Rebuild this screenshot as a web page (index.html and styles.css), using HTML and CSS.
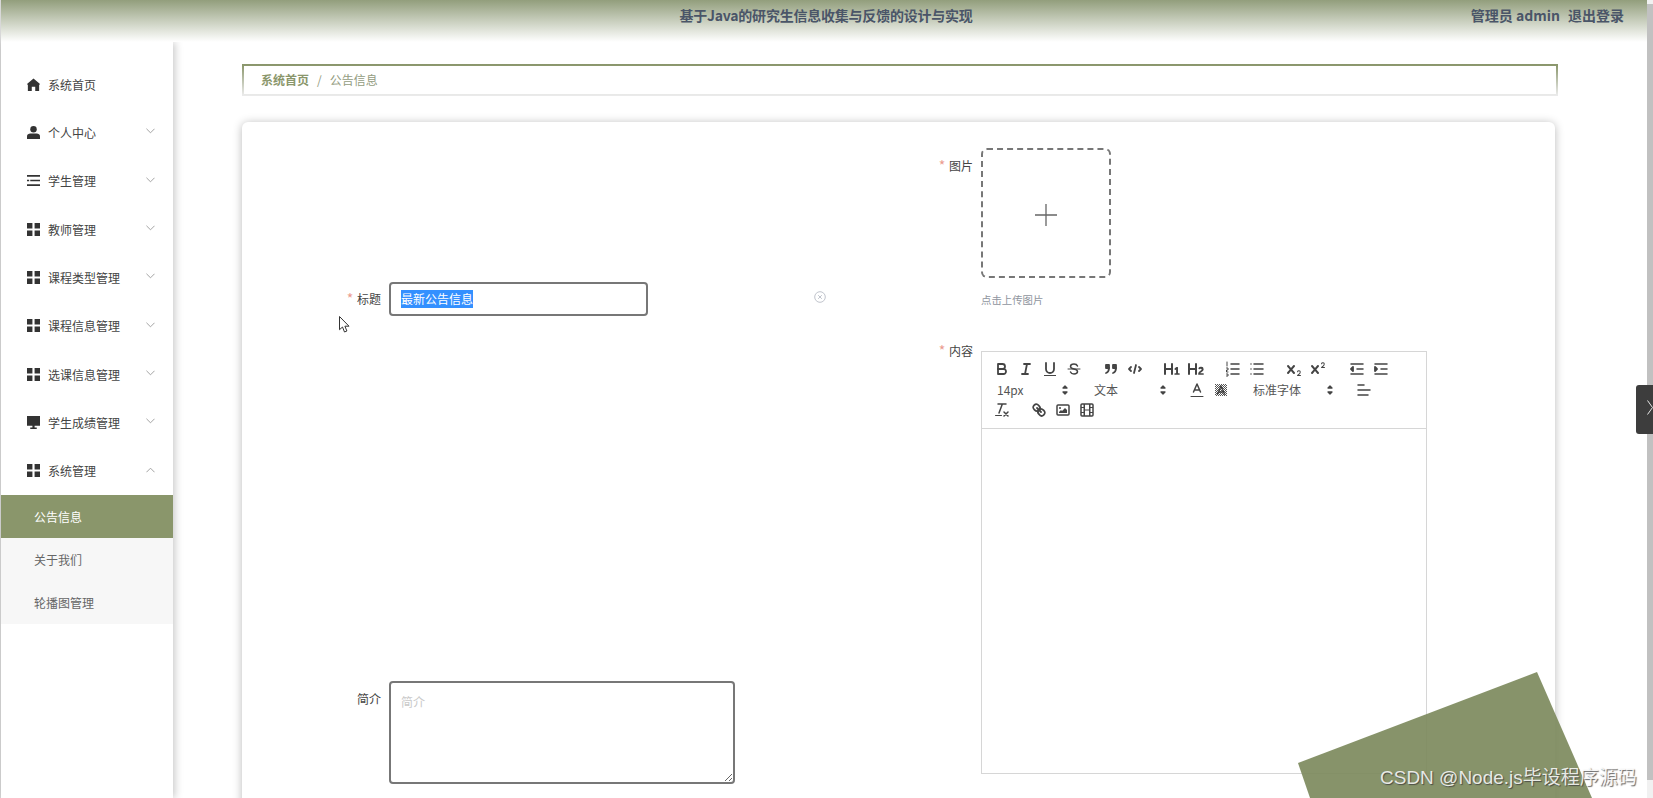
FILE: index.html
```html
<!DOCTYPE html>
<html lang="en">
<head>
    <meta charset="UTF-8">
    <meta name="viewport" content="width=device-width, initial-scale=1.0">
    <title>公告信息</title>
    <link rel="stylesheet" href="styles.css">
</head>
<body>
    <div class="app">
        <div class="app-main">
            <div class="top-bar">
                <div class="top-title">基于Java的研究生信息收集与反馈的设计与实现</div>
                <div class="top-user">
                    <span>管理员 admin</span>
                    <span>退出登录</span>
                </div>
            </div>

            <div class="app-body">
                <div class="sidebar">
                    <div class="menu-item">
                        <svg class="menu-icon" viewBox="0 0 12 12"><path d="M6 .5L0 5.600l.8.9V12h3.600V8h3.200v4h3.600V6.500l.8-.9z"/></svg>
                        <span>系统首页</span>
                    </div>
                    <div class="menu-item">
                        <svg class="menu-icon" viewBox="0 0 12 12"><circle cx="6" cy="3" r="3"/><path d="M0 12V9.500C0 7.800 1.500 7 3 7h6c1.500 0 3 .8 3 2.500V12z"/></svg>
                        <span>个人中心</span>
                        <svg class="menu-arrow" viewBox="0 0 10 6"><path d="M.5.5L5 5 9.500.5"/></svg>
                    </div>
                    <div class="menu-item">
                        <svg class="menu-icon" viewBox="0 0 12 12"><path d="M0 1h12v1.600H0zM3 5.200h9v1.600H3zM0 9.400h12V11H0zM0 5.200h2v1.600H0z"/></svg>
                        <span>学生管理</span>
                        <svg class="menu-arrow" viewBox="0 0 10 6"><path d="M.5.5L5 5 9.500.5"/></svg>
                    </div>
                    <div class="menu-item">
                        <svg class="menu-icon" viewBox="0 0 12 12"><path d="M0 0h5v5H0zM7 0h5v5H7zM0 7h5v5H0zM7 7h5v5H7z"/></svg>
                        <span>教师管理</span>
                        <svg class="menu-arrow" viewBox="0 0 10 6"><path d="M.5.5L5 5 9.500.5"/></svg>
                    </div>
                    <div class="menu-item">
                        <svg class="menu-icon" viewBox="0 0 12 12"><path d="M0 0h5v5H0zM7 0h5v5H7zM0 7h5v5H0zM7 7h5v5H7z"/></svg>
                        <span>课程类型管理</span>
                        <svg class="menu-arrow" viewBox="0 0 10 6"><path d="M.5.5L5 5 9.500.5"/></svg>
                    </div>
                    <div class="menu-item">
                        <svg class="menu-icon" viewBox="0 0 12 12"><path d="M0 0h5v5H0zM7 0h5v5H7zM0 7h5v5H0zM7 7h5v5H7z"/></svg>
                        <span>课程信息管理</span>
                        <svg class="menu-arrow" viewBox="0 0 10 6"><path d="M.5.5L5 5 9.500.5"/></svg>
                    </div>
                    <div class="menu-item">
                        <svg class="menu-icon" viewBox="0 0 12 12"><path d="M0 0h5v5H0zM7 0h5v5H7zM0 7h5v5H0zM7 7h5v5H7z"/></svg>
                        <span>选课信息管理</span>
                        <svg class="menu-arrow" viewBox="0 0 10 6"><path d="M.5.5L5 5 9.500.5"/></svg>
                    </div>
                    <div class="menu-item">
                        <svg class="menu-icon" viewBox="0 0 12 12"><path d="M0 0h12v9H0zM5 9h2v1.500H5zM3 10.500h6V12H3z"/></svg>
                        <span>学生成绩管理</span>
                        <svg class="menu-arrow" viewBox="0 0 10 6"><path d="M.5.5L5 5 9.500.5"/></svg>
                    </div>
                    <div class="menu-item">
                        <svg class="menu-icon" viewBox="0 0 12 12"><path d="M0 0h5v5H0zM7 0h5v5H7zM0 7h5v5H0zM7 7h5v5H7z"/></svg>
                        <span>系统管理</span>
                        <svg class="menu-arrow" viewBox="0 0 10 6"><path d="M.5 5.500L5 1l4.500 4.500"/></svg>
                    </div>
                    <div class="submenu">
                        <div class="submenu-item submenu-active">公告信息</div>
                        <div class="submenu-item">关于我们</div>
                        <div class="submenu-item">轮播图管理</div>
                    </div>
                </div>

                <div class="content">
                    <div class="breadcrumb">
                        <span class="crumb-home">系统首页</span>
                        <span class="crumb-sep">/</span>
                        <span class="crumb-current">公告信息</span>
                    </div>

                    <div class="form-card">
                        <div class="form-col form-col-left">
                            <div class="form-row form-row-title">
                                <label class="form-label label-mid"><i class="required">*</i> 标题</label>
                                <div class="fake-input"><span class="selected-text">最新公告信息</span></div>
                                <svg class="clear-icon" viewBox="0 0 12 12"><circle cx="6" cy="6" r="5.300"/><path d="M4.200 4.200l3.600 3.600M7.800 4.200l-3.600 3.600"/></svg>
                            </div>
                            <div class="form-row form-row-intro">
                                <label class="form-label label-top">简介</label>
                                <textarea class="intro-input" placeholder="简介"></textarea>
                            </div>
                        </div>

                        <div class="form-col">
                            <div class="form-row">
                                <label class="form-label label-top"><i class="required">*</i> 图片</label>
                                <div>
                                    <div class="upload-box">
                                        <svg class="upload-plus" viewBox="0 0 22 22"><path d="M11 0v22M0 11h22"/></svg>
                                    </div>
                                    <div class="upload-hint">点击上传图片</div>
                                </div>
                            </div>
                            <div class="form-row form-row-editor">
                                <label class="form-label label-editor"><i class="required">*</i> 内容</label>
                                <div class="editor">
                                    <div class="toolbar">
                                        <div class="tool-row">
                                            <div class="tool-group">
                                                <span class="tool-btn"><svg viewBox="0 0 18 18"><path d="M5,4H9.500A2.500,2.500,0,0,1,12,6.500v0A2.500,2.500,0,0,1,9.500,9H5V4Z"/><path d="M5,9h5.500A2.500,2.500,0,0,1,13,11.500v0A2.500,2.500,0,0,1,10.500,14H5V9Z"/></svg></span>
                                                <span class="tool-btn"><svg viewBox="0 0 18 18"><path d="M7 4h6M5 14h6M8 14l2-10"/></svg></span>
                                                <span class="tool-btn"><svg viewBox="0 0 18 18"><path d="M5,3V9a4,4,0,0,0,4,4h0a4,4,0,0,0,4-4V3"/><rect class="ico-fill" height="1" width="12" x="3" y="15"/></svg></span>
                                                <span class="tool-btn"><svg viewBox="0 0 18 18"><path class="ico-thin" d="M3 9h12"/><path class="ico-mid" d="M12.500 6C12 4.700 10.700 4 9 4 7 4 5.500 5 5.500 6.500S7 8.500 9 9c2 .5 3.500 1.200 3.500 2.600S11 14 9 14c-1.700 0-3-.7-3.500-2"/></svg></span>
                                            </div>
                                            <div class="tool-group">
                                                <span class="tool-btn"><svg viewBox="0 0 18 18"><rect class="ico-solid" height="3" width="3" x="4" y="5"/><rect class="ico-solid" height="3" width="3" x="11" y="5"/><path d="M7,8c0,4-3,5-3,5"/><path d="M14,8c0,4-3,5-3,5"/></svg></span>
                                                <span class="tool-btn"><svg viewBox="0 0 18 18"><path d="M5 7L3 9l2 2M13 7l2 2-2 2M10 5l-2 8"/></svg></span>
                                            </div>
                                            <div class="tool-group">
                                                <span class="tool-btn"><svg viewBox="0 0 18 18"><path class="ico-fill" d="M10,4V14a1,1,0,0,1-2,0V10H3v4a1,1,0,0,1-2,0V4A1,1,0,0,1,3,4V8H8V4a1,1,0,0,1,2,0Zm6.068,9.209H14.990V7.599a.541.541,0,0,0-.605-.605h-.627a1.011,1.011,0,0,0-.748.297L11.645,8.566a.544.544,0,0,0-.022.858l.286.308a.539.539,0,0,0,.847.033l.099-.088a1.214,1.214,0,0,0,.242-.353h.022s-.011.309-.011.605V13.209H12.041a.541.541,0,0,0-.605.605v.439a.541.541,0,0,0,.605.605h4.027a.541.541,0,0,0,.605-.605v-.439A.541.541,0,0,0,16.068,13.209Z"/></svg></span>
                                                <span class="tool-btn"><svg viewBox="0 0 18 18"><path class="ico-fill" d="M16.740,13.814v.439a.541.541,0,0,1-.605.605H11.855a.584.584,0,0,1-.649-.605V14.013c0-2.905,3.399-3.422,3.399-4.555a.777.777,0,0,0-.847-.781,1.177,1.177,0,0,0-.836.385c-.275.264-.561.374-.858.132l-.429-.341c-.308-.242-.385-.518-.154-.814a2.972,2.972,0,0,1,2.454-1.177,2.454,2.454,0,0,1,2.684,2.409c0,2.453-3.179,2.927-3.278,3.938h2.794A.541.541,0,0,1,16.740,13.814ZM9,3A1,1,0,0,0,8,4V8H3V4A1,1,0,0,0,1,4V14a1,1,0,0,0,2,0V10H8v4a1,1,0,0,0,2,0V4A1,1,0,0,0,9,3Z"/></svg></span>
                                            </div>
                                            <div class="tool-group">
                                                <span class="tool-btn"><svg viewBox="0 0 18 18"><path class="ico-mid" d="M7 4h8M7 9h8M7 14h8"/><path class="ico-thin" d="M3 2v4M2.500 8h1.500v2h-1.500v2h1.500M2.500 14h1.500v2h-1.500"/></svg></span>
                                                <span class="tool-btn"><svg viewBox="0 0 18 18"><path class="ico-mid" d="M6 4h9M6 9h9M6 14h9M3 4h0M3 9h0M3 14h0"/></svg></span>
                                            </div>
                                            <div class="tool-group">
                                                <span class="tool-btn"><svg viewBox="0 0 18 18"><path class="ico-fill" d="M15.500,15H13.861a3.858,3.858,0,0,0,1.914-2.975,1.800,1.800,0,0,0-1.600-1.751A1.921,1.921,0,0,0,12.021,11.700a.5.5,0,1,0,.957.291h0a.914.914,0,0,1,1.053-.725,.81.81,0,0,1,.744.762c0,1.076-1.170,1.870-1.940,2.431A1.456,1.456,0,0,0,12,15.500a.5.5,0,0,0,.5.5h3A.5.5,0,0,0,15.500,15Z"/><path class="ico-fill" d="M9.650,5.241a1,1,0,0,0-1.409.108L6,7.964,3.759,5.349A1,1,0,0,0,2.241,6.649L4.684,9.500,2.241,12.350A1,1,0,0,0,3.759,13.650L6,11.036,8.241,13.650a1,1,0,1,0,1.518-1.300L7.316,9.500,9.759,6.651A1,1,0,0,0,9.650,5.241Z"/></svg></span>
                                                <span class="tool-btn"><svg viewBox="0 0 18 18"><path class="ico-fill" d="M15.500,7H13.861a4.015,4.015,0,0,0,1.914-2.975,1.800,1.800,0,0,0-1.600-1.751A1.922,1.922,0,0,0,12.021,3.700a.5.5,0,1,0,.957.291,.917.917,0,0,1,1.053-.725,.81.81,0,0,1,.744.762c0,1.077-1.164,1.925-1.934,2.486A1.423,1.423,0,0,0,12,7.500a.5.5,0,0,0,.5.5h3A.5.5,0,0,0,15.500,7Z"/><path class="ico-fill" d="M9.650,5.241a1,1,0,0,0-1.409.108L6,7.964,3.759,5.349A1,1,0,0,0,2.241,6.649L4.684,9.500,2.241,12.350A1,1,0,0,0,3.759,13.650L6,11.036,8.241,13.650a1,1,0,1,0,1.518-1.300L7.316,9.500,9.759,6.651A1,1,0,0,0,9.650,5.241Z"/></svg></span>
                                            </div>
                                            <div class="tool-group tool-group-indent">
                                                <span class="tool-btn"><svg viewBox="0 0 18 18"><path class="ico-mid" d="M3 14h12M3 4h12M9 9h6"/><path class="ico-solid" d="M5 7v4L3 9z"/></svg></span>
                                                <span class="tool-btn"><svg viewBox="0 0 18 18"><path class="ico-mid" d="M3 14h12M3 4h12M9 9h6"/><path class="ico-solid" d="M3 7v4l2-2z"/></svg></span>
                                            </div>
                                        </div>
                                        <div class="tool-row">
                                            <div class="tool-picker picker-size">
                                                <span>14px</span>
                                                <svg class="picker-arrow" viewBox="0 0 18 18"><path d="M7 11l2 2 2-2zM7 7l2-2 2 2z"/></svg>
                                            </div>
                                            <div class="tool-picker picker-header">
                                                <span>文本</span>
                                                <svg class="picker-arrow" viewBox="0 0 18 18"><path d="M7 11l2 2 2-2zM7 7l2-2 2 2z"/></svg>
                                            </div>
                                            <div class="tool-group">
                                                <span class="tool-btn"><svg viewBox="0 0 18 18"><path class="ico-thin" d="M3 15.500h12"/><path class="ico-mid" d="M5.500 11L9 3l3.500 8M11.600 9H6.400"/></svg></span>
                                                <span class="tool-btn"><svg viewBox="0 0 18 18"><defs><pattern id="bg-dots" width="2" height="2" patternUnits="userSpaceOnUse"><rect class="dot-cell" width="1" height="1"/><rect class="dot-cell" x="1" y="1" width="1" height="1"/></pattern></defs><rect class="dot-area" x="3" y="3" width="12" height="12"/><path class="ico-mid" d="M5.500 13L9 5l3.500 8M11.600 11H6.400"/></svg></span>
                                            </div>
                                            <div class="tool-picker picker-font">
                                                <span>标准字体</span>
                                                <svg class="picker-arrow" viewBox="0 0 18 18"><path d="M7 11l2 2 2-2zM7 7l2-2 2 2z"/></svg>
                                            </div>
                                            <div class="tool-group">
                                                <span class="tool-btn"><svg viewBox="0 0 18 18"><path class="ico-mid" d="M3 9h12M3 14h10M3 4h6"/></svg></span>
                                            </div>
                                        </div>
                                        <div class="tool-row">
                                            <div class="tool-group">
                                                <span class="tool-btn"><svg viewBox="0 0 18 18"><path class="ico-mid" d="M5 3h8M6 12l3.350-9M11 11l4 4M15 11l-4 4"/><rect class="ico-fill" height="1" rx=".5" width="7" x="2" y="14"/></svg></span>
                                            </div>
                                            <div class="tool-group">
                                                <span class="tool-btn"><svg viewBox="0 0 18 18"><path d="M7 7l4 4"/><path d="M8.900,4.577a3.476,3.476,0,0,1,.36,4.679A3.476,3.476,0,0,1,4.577,8.900C3.185,7.500,2.035,6.400,4.217,4.217S7.500,3.185,8.900,4.577Z"/><path d="M13.423,9.100a3.476,3.476,0,0,0-4.679-.36,3.476,3.476,0,0,0,.36,4.679c1.392,1.392,2.500,2.542,4.679.36S14.815,10.500,13.423,9.100Z"/></svg></span>
                                                <span class="tool-btn"><svg viewBox="0 0 18 18"><rect class="ico-mid" height="10" rx="1" width="12" x="3" y="4"/><circle class="ico-fill" cx="6" cy="7" r="1"/><path class="ico-fill" d="M5 12v-1l2-2 1 1 3-3 2 2v3z"/></svg></span>
                                                <span class="tool-btn"><svg viewBox="0 0 18 18"><rect class="ico-mid" height="12" rx="1" width="12" x="3" y="3"/><rect class="ico-fill" height="12" width="1.500" x="5.500" y="3"/><rect class="ico-fill" height="12" width="1.500" x="11" y="3"/><rect class="ico-fill" height="1" width="5" x="6" y="8.500"/><rect class="ico-fill" height="1" width="3" x="3" y="6"/><rect class="ico-fill" height="1" width="3" x="3" y="11"/><rect class="ico-fill" height="1" width="3" x="12" y="6"/><rect class="ico-fill" height="1" width="3" x="12" y="11"/></svg></span>
                                            </div>
                                        </div>
                                    </div>
                                </div>
                            </div>
                        </div>
                    </div>
                </div>
            </div>
        </div>
        <div class="scrollbar"><div class="scrollbar-thumb"></div></div>
    </div>

    <div class="corner-shape"></div>
    <div class="drawer-handle">
        <svg viewBox="0 0 6 15"><path d="M.5.5L5.500 7.500.5 14.500"/></svg>
    </div>
    <svg class="mouse-pointer" viewBox="0 0 11 17"><path d="M.5.5v13.200l3-2.700 2 5 2.400-1-2-4.800h4.100z"/></svg>
    <div class="watermark">CSDN @Node.js毕设程序源码</div>
</body>
</html>
```

FILE: styles.css
```css
* {
    margin: 0;
    padding: 0;
    box-sizing: border-box;
}

body {
    font-family: "Noto Sans CJK SC", "Liberation Sans", sans-serif;
    font-size: 12px;
    color: #333;
    background: #fff;
    width: 1653px;
    height: 798px;
    overflow: hidden;
    position: relative;
}

.app {
    display: flex;
    height: 100%;
    border-left: 1px solid #d8d8d8;
}

.app-main {
    flex: 1;
    min-width: 0;
    display: flex;
    flex-direction: column;
}

.scrollbar {
    width: 6px;
    flex-shrink: 0;
    background: #f1f1f1;
    padding: 4px 0 18px;
}

.scrollbar-thumb {
    height: 100%;
    background: #c1c1c1;
}

.top-bar {
    height: 42px;
    flex-shrink: 0;
    display: flex;
    align-items: flex-start;
    justify-content: center;
    position: relative;
    background: linear-gradient(180deg, #929e7c 0%, #ffffff 100%);
    color: #4a5568;
    font-size: 14px;
    font-weight: 700;
    line-height: 31px;
}

.top-title {
    letter-spacing: -0.22px;
    margin-left: 4px;
}

.top-user {
    position: absolute;
    right: 23px;
    top: 0;
    display: flex;
    gap: 8px;
}

.app-body {
    flex: 1;
    display: flex;
    min-height: 0;
}

.sidebar {
    width: 172px;
    flex-shrink: 0;
    padding-top: 18px;
    background: #fff;
    box-shadow: 2px 0 8px rgba(0, 0, 0, 0.22);
}

.menu-item {
    height: 48.33px;
    display: flex;
    align-items: center;
    padding-left: 26px;
    color: #444;
    position: relative;
}

.menu-icon {
    width: 13px;
    height: 13px;
    margin-right: 8px;
    fill: #333;
    flex-shrink: 0;
}

.menu-arrow {
    position: absolute;
    left: 145px;
    top: 20px;
    width: 9px;
    height: 6px;
    fill: none;
    stroke: #999;
    stroke-width: 1;
}

.submenu-item {
    height: 43px;
    line-height: 43px;
    padding-left: 33px;
    background: #f7f7f7;
    color: #666;
}

.submenu-active {
    background: #8a966b;
    color: #fff;
}

.content {
    flex: 1;
    min-width: 0;
    padding: 22px 92px 0 69px;
}

.breadcrumb {
    width: 1316px;
    height: 32px;
    display: flex;
    align-items: center;
    padding-left: 17px;
    border: 2px solid;
    border-image: linear-gradient(180deg, #8a966b, #ebebeb) 1;
    color: #939c81;
    line-height: 1;
}

.crumb-home {
    color: #8a966b;
    font-weight: 700;
}

.crumb-sep {
    margin: 0 8px;
}

.form-card {
    width: 1313px;
    height: 700px;
    margin-top: 26px;
    padding-top: 26px;
    display: grid;
    grid-template-columns: 592px 1fr;
    background: #fff;
    border-radius: 6px;
    box-shadow: 0 1px 10px rgba(0, 0, 0, 0.28);
}

.form-row {
    display: flex;
    align-items: flex-start;
}

.form-label {
    width: 139px;
    margin-right: 8px;
    flex-shrink: 0;
    text-align: right;
    color: #444;
    line-height: 18px;
}

.label-top {
    margin-top: 9px;
}

.label-mid {
    margin-top: 8px;
}

.label-editor {
    margin-top: -9px;
}

.required {
    color: #eb9c8f;
    font-style: normal;
    font-size: 14px;
    line-height: 0;
    margin-right: 1px;
}

.form-row-title {
    margin-top: 134px;
}

.form-row-intro {
    margin-top: 365px;
}

.fake-input {
    width: 259px;
    height: 34px;
    padding-left: 10px;
    display: flex;
    align-items: center;
    border: 2px solid #777;
    border-radius: 4px;
    flex-shrink: 0;
}

.selected-text {
    background: #3390ff;
    color: #fff;
    line-height: 18px;
}

.clear-icon {
    width: 12px;
    height: 12px;
    margin: 9px 0 0 166px;
    fill: none;
    stroke: #c0c4cc;
    stroke-width: 1;
}

.intro-input {
    display: block;
    width: 346px;
    height: 103px;
    padding: 10px 10px;
    border: 2px solid #777;
    border-radius: 4px;
    font: inherit;
    color: #333;
    outline: none;
}

.intro-input::placeholder {
    color: #c9c9c9;
}

.upload-box {
    width: 130px;
    height: 130px;
    padding-top: 4px;
    display: flex;
    align-items: center;
    justify-content: center;
    border: 2px dashed #777;
    border-radius: 6px;
}

.upload-plus {
    width: 22px;
    height: 22px;
    fill: none;
    stroke: #666;
    stroke-width: 1.300;
}

.upload-hint {
    margin-top: 14px;
    font-size: 10.400px;
    line-height: 16px;
    color: #8f959e;
}

.form-row-editor {
    margin-top: 43px;
}

.editor {
    width: 446px;
    height: 423px;
    border: 1px solid #d6d6d6;
}

.toolbar {
    height: 77px;
    padding: 7px 0 0 8px;
    border-bottom: 1px solid #d6d6d6;
}

.tool-row {
    display: flex;
    gap: 13px;
    height: 20.500px;
    align-items: center;
}

.tool-group {
    display: flex;
}

.tool-group-indent {
    margin-left: 2px;
}

.tool-btn {
    width: 24px;
    height: 18px;
    display: flex;
    justify-content: center;
}

.tool-btn svg {
    width: 18px;
    height: 18px;
    fill: none;
    stroke: #444;
    stroke-width: 1.800;
    stroke-linecap: round;
    stroke-linejoin: round;
}

.tool-btn svg .ico-thin {
    stroke-width: 1;
}

.tool-btn svg .ico-mid {
    stroke-width: 1.500;
}

.tool-btn svg .ico-fill {
    fill: #444;
    stroke: none;
}

.tool-btn svg .ico-solid {
    fill: #444;
}

.tool-btn svg .dot-cell {
    fill: #555;
    stroke: none;
}

.tool-btn svg .dot-area {
    fill: url(#bg-dots);
    stroke: none;
}

.tool-picker {
    height: 18px;
    padding-left: 7px;
    display: flex;
    align-items: center;
    justify-content: space-between;
    color: #555;
    line-height: 18px;
}

.picker-size {
    width: 84px;
}

.picker-header {
    width: 85px;
}

.picker-font {
    width: 93px;
}

.picker-arrow {
    width: 18px;
    height: 18px;
    fill: #444;
    stroke: #444;
    stroke-width: 1.300;
    stroke-linejoin: round;
}

.corner-shape {
    position: absolute;
    left: 1290px;
    top: 670px;
    width: 310px;
    height: 128px;
    background: rgba(126, 139, 95, 0.93);
    clip-path: polygon(8px 93px, 247px 2px, 302px 128px, 20px 128px);
}

.drawer-handle {
    position: absolute;
    left: 1636px;
    top: 385px;
    width: 17px;
    height: 49px;
    padding: 15px 0 0 11px;
    background: #3d3d3d;
    border-radius: 3px 0 0 3px;
}

.drawer-handle svg {
    display: block;
    width: 6px;
    height: 15px;
    fill: none;
    stroke: #e6e6e6;
    stroke-width: 1;
}

.mouse-pointer {
    position: absolute;
    left: 339px;
    top: 316px;
    width: 11px;
    height: 17px;
    fill: #fff;
    stroke: #333;
    stroke-width: 1;
}

.watermark {
    position: absolute;
    left: 1380px;
    top: 766px;
    font-family: "Liberation Sans", "Noto Sans CJK SC", sans-serif;
    font-size: 19px;
    line-height: 24px;
    color: rgba(255, 255, 255, 0.85);
    text-shadow: 1px 1px 1px rgba(60, 60, 60, 0.8);
    white-space: nowrap;
}
```
